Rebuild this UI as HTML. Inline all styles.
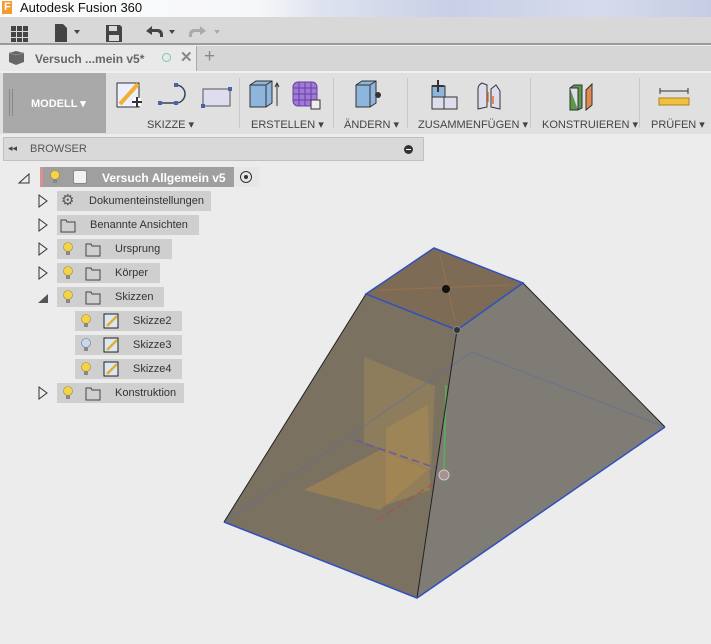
<!DOCTYPE html>
<html><head><meta charset="utf-8"><style>
*{margin:0;padding:0;box-sizing:border-box}
body{width:711px;height:644px;overflow:hidden;background:#ececec;font-family:"Liberation Sans",Arial,sans-serif;position:relative}
.abs{position:absolute}
.t{font-size:11px;color:#444}
.row{position:absolute;height:20px;background:#cfcfcf;font-size:11px;color:#333;line-height:20px}
</style></head><body>
<div class="abs" style="left:0;top:0;width:711px;height:17px;background:linear-gradient(90deg,#fcfcfc 0,#f6f7f9 260px,#dfe3ef 320px,#c9d0e6 450px,#d6dbec 600px,#c6cde3 711px)"></div>
<div class="abs" style="left:2px;top:1px;width:10px;height:13px;background:#f59a2e"></div>
<div class="abs" style="left:4px;top:1px;color:#fff;font-size:11px;font-weight:bold">F</div>
<div class="abs" style="left:20px;top:0px;font-size:13px;color:#111">Autodesk Fusion 360</div>
<div class="abs" style="left:0;top:17px;width:711px;height:28px;background:#d8d8d8;border-bottom:2px solid #9a9a9a"></div>
<svg class="abs" style="left:0;top:17px" width="240" height="28">
<g fill="#444"><rect x="11" y="9" width="5" height="5"/><rect x="17" y="9" width="5" height="5"/><rect x="23" y="9" width="5" height="5"/><rect x="11" y="15" width="5" height="5"/><rect x="17" y="15" width="5" height="5"/><rect x="23" y="15" width="5" height="5"/><rect x="11" y="21" width="5" height="4"/><rect x="17" y="21" width="5" height="4"/><rect x="23" y="21" width="5" height="4"/>
<path d="M55 7h8l4 4v14h-12z"/><path d="M74 13h6l-3 4z"/>
<path d="M106 8h14l2 2v15h-16z"/>
<path d="M146 14l6-5v3h6a5 5 0 0 1 5 5v3h-3v-2a3 3 0 0 0-3-3h-5v3z"/><path d="M169 13h6l-3 4z"/></g>
<rect x="109" y="9" width="8" height="5" fill="#d8d8d8"/><rect x="109" y="18" width="10" height="6" fill="#d8d8d8"/>
<g fill="#aaa"><path d="M206 14l-6-5v3h-6a5 5 0 0 0-5 5v3h3v-2a3 3 0 0 1 3-3h5v3z"/><path d="M214 13h6l-3 4z"/></g>
</svg>
<div class="abs" style="left:0;top:46px;width:711px;height:25px;background:#d6d6d6"></div>
<div class="abs" style="left:0;top:46px;width:197px;height:25px;background:#e9e9e9;border-right:1px solid #aaa"></div>
<svg class="abs" style="left:8px;top:50px" width="18" height="16"><path d="M1 3l7-2 8 2v9l-8 3-7-3z" fill="#666"/><path d="M1 3l7 2 8-2" stroke="#888" fill="none"/></svg>
<div class="abs" style="left:35px;top:52px;font-size:12px;font-weight:bold;color:#666">Versuch ...mein v5*</div>
<div class="abs" style="left:162px;top:53px;width:9px;height:9px;border:1.5px solid #7cc6b0;border-radius:50%"></div>
<div class="abs" style="left:180px;top:48px;font-size:15px;font-weight:bold;color:#888">✕</div>
<div class="abs" style="left:204px;top:46px;font-size:19px;color:#888">+</div>
<div class="abs" style="left:0;top:71px;width:711px;height:63px;background:#e0e0e0;border-top:2px solid #f0f0f0"></div>
<div class="abs" style="left:3px;top:73px;width:103px;height:60px;background:#a9a9a9"></div>
<div class="abs" style="left:9px;top:89px;width:1px;height:27px;background:#888"></div>
<div class="abs" style="left:12px;top:89px;width:1px;height:27px;background:#888"></div>
<div class="abs" style="left:31px;top:97px;font-size:11px;font-weight:bold;color:#fff">MODELL ▾</div>
<svg class="abs" style="left:110px;top:76px" width="601" height="40">
<rect x="7" y="7" width="22" height="24" fill="#eef" stroke="#333"/><path d="M10 28l18-20" stroke="#f0b030" stroke-width="4"/><rect x="23" y="22" width="8" height="8" fill="#fff"/><path d="M27 21v10M22 26h10" stroke="#333" stroke-width="2"/>
<path d="M50 27h16a9 9 0 0 0 0-18" fill="none" stroke="#345" stroke-width="1.5"/><g fill="#4a62a8"><rect x="48" y="25" width="4" height="4"/><rect x="64" y="25" width="4" height="4"/><rect x="64" y="7" width="4" height="4"/></g>
<rect x="93" y="13" width="27" height="17" fill="#dde" stroke="#555"/><rect x="91" y="28" width="4" height="4" fill="#4a62a8"/><rect x="118" y="11" width="4" height="4" fill="#4a62a8"/>
<path d="M140 9l6-4h16v22l-6 4h-16z" fill="#8eb5dc" stroke="#333"/><path d="M140 9h16v22M156 9l6-4" stroke="#333" fill="none"/><path d="M167 8v22M165 11l2-4 2 4" stroke="#333" fill="none"/>
<rect x="183" y="6" width="24" height="24" rx="5" fill="#a07ad8" stroke="#6a3fa0"/><path d="M189 6v24M195 6v24M201 6v24M183 12h24M183 18h24M183 24h24" stroke="#6a3fa0"/><rect x="201" y="24" width="9" height="9" fill="#eee" stroke="#333"/>
<path d="M246 9l6-4h14v22l-6 4h-14z" fill="#8eb5dc" stroke="#333"/><path d="M246 9h14v22M260 9l6-4" stroke="#333" fill="none"/><circle cx="268" cy="19" r="3" fill="#333"/>
<rect x="322" y="10" width="13" height="12" fill="#8eb5dc" stroke="#333"/><rect x="322" y="21" width="13" height="12" fill="#dde" stroke="#333"/><rect x="334" y="21" width="13" height="12" fill="#dde" stroke="#333"/><path d="M328 4v12M322 10h12" stroke="#333" stroke-width="2"/>
<path d="M368 33v-20q0-4 4-6l5 2v22zM381 31v-18l5-4 4 6v18z" fill="#dde" stroke="#333"/><path d="M378 16v10M383 20v8" stroke="#e07030" stroke-width="1.5"/>
<path d="M460 12l4-3h8v23l-4 2h-8z" fill="#5a9a4a" stroke="#333"/><path d="M460 12h8v22" fill="#dde" stroke="#333"/><path d="M476 14l6-6v21l-6 5z" fill="#e08a50" stroke="#333"/>
<path d="M550 15h28M550 12v6M578 12v6" stroke="#333"/><rect x="549" y="22" width="30" height="7" fill="#f0c040" stroke="#b08020"/>
</svg>
<div class="abs t" style="left:147px;top:118px">SKIZZE ▾</div>
<div class="abs t" style="left:251px;top:118px">ERSTELLEN ▾</div>
<div class="abs t" style="left:344px;top:118px">ÄNDERN ▾</div>
<div class="abs t" style="left:418px;top:118px">ZUSAMMENFÜGEN ▾</div>
<div class="abs t" style="left:542px;top:118px">KONSTRUIEREN ▾</div>
<div class="abs t" style="left:651px;top:118px">PRÜFEN ▾</div>
<div class="abs" style="left:239px;top:78px;width:1px;height:50px;background:#c8c8c8"></div>
<div class="abs" style="left:333px;top:78px;width:1px;height:50px;background:#c8c8c8"></div>
<div class="abs" style="left:407px;top:78px;width:1px;height:50px;background:#c8c8c8"></div>
<div class="abs" style="left:530px;top:78px;width:1px;height:50px;background:#c8c8c8"></div>
<div class="abs" style="left:639px;top:78px;width:1px;height:50px;background:#c8c8c8"></div>
<div class="abs" style="left:3px;top:137px;width:421px;height:24px;background:#d9d9d9;border:1px solid #c0c0c0"></div>
<div class="abs" style="left:8px;top:143px;font-size:9px;color:#444">◂◂</div>
<div class="abs" style="left:30px;top:143px;font-size:11px;color:#555">BROWSER</div>
<div class="abs" style="left:404px;top:145px;width:9px;height:9px;border-radius:50%;background:#333"></div>
<div class="abs" style="left:406px;top:149px;width:5px;height:1px;background:#fff"></div>
<svg class="abs" style="left:0;top:162px" width="711" height="482" viewBox="0 162 711 482">
<polygon points="366,294 457,330 417,598 224,522" fill="#7b7161"/>
<polygon points="457,330 523,283 665,427 417,598" fill="#7e7c75"/>
<polygon points="434,248 523,283 457,330 366,294" fill="#7e6b56"/>
<polygon points="364,357 435,386 431,470 364,442" fill="#a28a5a" opacity=".5"/>
<polygon points="304,490 380,450 428,470 380,510" fill="#a8894f" opacity=".6"/>
<polygon points="386,428 428,405 430,490 386,505" fill="#b09050" opacity=".45"/>
<path d="M224,522 L472,352 L665,427" stroke="#5a6aa8" stroke-width="1" fill="none" opacity=".6"/>
<path d="M355,440 L436,468" stroke="#6a5aa0" stroke-dasharray="8,4" stroke-width="1.5"/>
<path d="M377,520 L436,482" stroke="#b05040" stroke-dasharray="8,4" stroke-width="1.5" opacity=".8"/>
<path d="M444,470 L446,385" stroke="#5ab05a" stroke-width="1.5"/>
<path d="M380,290 L510,285 M440,255 L455,320" stroke="#b07a40" opacity=".5"/>
<path d="M366,294 L224,522 M523,283 L665,427 M457,330 L417,598" stroke="#222" stroke-width="1"/>
<path d="M434,248 L523,283 L457,330 L366,294 Z M224,522 L417,598 L665,427" stroke="#3050c0" stroke-width="1.5" fill="none"/>
<circle cx="446" cy="289" r="4" fill="#111"/>
<circle cx="457" cy="330" r="3.5" fill="#333" stroke="#888"/>
<circle cx="444" cy="475" r="5" fill="#a89090" stroke="#ccc"/>
</svg>
<svg class="abs" style="left:0;top:162px" width="60" height="240">
<path d="M19 21l10-9v9z" fill="none" stroke="#333"/>
<path d="M39 33l8 6-8 6z M39 57l8 6-8 6z M39 81l8 6-8 6z M39 105l8 6-8 6z M39 225l8 6-8 6z" fill="none" stroke="#333"/>
<path d="M38 141l10-9v9z" fill="#555"/>
</svg>
<div class="row" style="left:40px;top:167px;width:219px;background:#9f9f9f;border-left:3px solid #d89090"></div>
<div class="abs" style="top:171px;font-size:12px;font-weight:bold;color:#fff;left:102px">Versuch Allgemein v5</div>
<div class="abs" style="left:73px;top:170px;width:14px;height:14px;background:#f2f2f2;border:1px solid #888;border-radius:2px"></div>
<div class="abs" style="left:234px;top:167px;width:25px;height:20px;background:#e6e6e6"></div>
<div class="abs" style="left:240px;top:171px;width:12px;height:12px;border:1.5px solid #333;border-radius:50%"></div>
<div class="abs" style="left:244px;top:175px;width:4px;height:4px;background:#333;border-radius:50%"></div>
<div class="row" style="left:57px;top:191px;width:154px"><span style="position:absolute;left:32px">Dokumenteinstellungen</span><span style="position:absolute;left:4px;font-size:15px;color:#555">⚙</span></div>
<div class="row" style="left:57px;top:215px;width:142px"><span style="position:absolute;left:33px">Benannte Ansichten</span></div>
<div class="row" style="left:57px;top:239px;width:115px"><span style="position:absolute;left:58px">Ursprung</span></div>
<div class="row" style="left:57px;top:263px;width:103px"><span style="position:absolute;left:58px">Körper</span></div>
<div class="row" style="left:57px;top:287px;width:107px"><span style="position:absolute;left:58px">Skizzen</span></div>
<div class="row" style="left:75px;top:311px;width:107px"><span style="position:absolute;left:58px">Skizze2</span></div>
<div class="row" style="left:75px;top:335px;width:107px"><span style="position:absolute;left:58px">Skizze3</span></div>
<div class="row" style="left:75px;top:359px;width:107px"><span style="position:absolute;left:58px">Skizze4</span></div>
<div class="row" style="left:57px;top:383px;width:127px"><span style="position:absolute;left:58px">Konstruktion</span></div>
<svg class="abs" style="left:0;top:0" width="200" height="410">
<g fill="none" stroke="#444"><path d="M61 220h5l1 2h8v10h-14z"/><path d="M86 244h5l1 2h8v10h-14z"/><path d="M86 268h5l1 2h8v10h-14z"/><path d="M86 292h5l1 2h8v10h-14z"/><path d="M86 388h5l1 2h8v10h-14z"/></g>
<g fill="#f2d34a" stroke="#a08a20" stroke-width=".6"><circle cx="55" cy="175" r="4.5"/><circle cx="68" cy="247" r="4.5"/><circle cx="68" cy="271" r="4.5"/><circle cx="68" cy="295" r="4.5"/><circle cx="86" cy="319" r="4.5"/><circle cx="86" cy="367" r="4.5"/><circle cx="68" cy="391" r="4.5"/></g>
<circle cx="86" cy="343" r="4.5" fill="#c8d8f0" stroke="#607090" stroke-width=".6"/>
<g fill="#888"><rect x="53" y="179" width="4" height="4"/><rect x="66" y="251" width="4" height="4"/><rect x="66" y="275" width="4" height="4"/><rect x="66" y="299" width="4" height="4"/><rect x="84" y="323" width="4" height="4"/><rect x="84" y="347" width="4" height="4"/><rect x="84" y="371" width="4" height="4"/><rect x="66" y="395" width="4" height="4"/></g>
<g><rect x="104" y="314" width="14" height="14" fill="#dde6f4" stroke="#222"/><path d="M107 326l10-10" stroke="#e0b030" stroke-width="2.5"/>
<rect x="104" y="338" width="14" height="14" fill="#dde6f4" stroke="#222"/><path d="M107 350l10-10" stroke="#e0b030" stroke-width="2.5"/>
<rect x="104" y="362" width="14" height="14" fill="#dde6f4" stroke="#222"/><path d="M107 374l10-10" stroke="#e0b030" stroke-width="2.5"/></g>
</svg>
</body></html>
